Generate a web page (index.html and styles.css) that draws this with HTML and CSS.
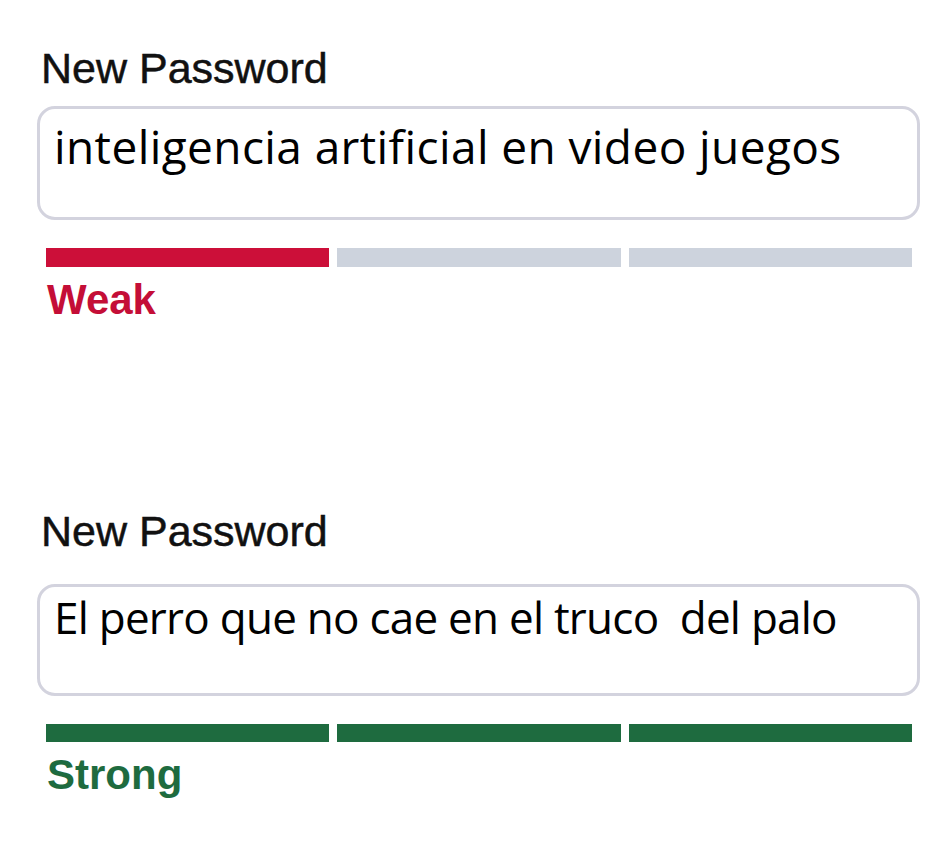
FILE: index.html
```html
<!DOCTYPE html>
<html lang="en">
<head>
<meta charset="utf-8">
<title>New Password</title>
<link rel="stylesheet" href="styles.css">
</head>
<body>
<main class="page">
  <section class="field field-weak">
    <label class="label">New Password</label>
    <div class="input input-first"><span class="value">inteligencia artificial en video juegos</span></div>
    <div class="meter">
      <span class="seg seg-weak"></span>
      <span class="seg"></span>
      <span class="seg"></span>
    </div>
    <div class="strength strength-weak">Weak</div>
  </section>
  <section class="field field-strong">
    <label class="label">New Password</label>
    <div class="input input-second"><span class="value">El perro que no cae en el truco  del palo</span></div>
    <div class="meter meter-second">
      <span class="seg seg-strong"></span>
      <span class="seg seg-strong"></span>
      <span class="seg seg-strong"></span>
    </div>
    <div class="strength strength-strong">Strong</div>
  </section>
</main>
</body>
</html>
```

FILE: styles.css
```css
html, body {
  margin: 0;
  padding: 0;
  background: #ffffff;
}

.page {
  width: 950px;
  height: 843px;
  overflow: hidden;
  display: flex;
  flex-direction: column;
}

.field {
  display: flex;
  flex-direction: column;
  padding: 0 30px 0 37px;
}

.field-weak {
  padding-top: 47px;
}

.field-strong {
  padding-top: 189px;
}

.label {
  font-family: "Liberation Sans", Arial, sans-serif;
  font-size: 43px;
  line-height: 43px;
  color: #111111;
  -webkit-text-stroke: 0.5px #111111;
  padding-left: 4px;
}

.input {
  margin-top: 16px;
  height: 114px;
  box-sizing: border-box;
  border: 3px solid #d3d3de;
  border-radius: 18px;
  padding-left: 14px;
  font-family: "Open Sans", sans-serif;
  color: #000000;
  white-space: pre;
}

.input-first {
  padding-top: 11px;
  font-size: 46px;
  line-height: 52px;
  letter-spacing: 0.4px;
}

.input-second {
  margin-top: 31px;
  padding-top: 4px;
  height: 112px;
  font-size: 44px;
  line-height: 52px;
  letter-spacing: -0.75px;
}

.meter {
  display: flex;
  gap: 8px;
  margin: 28px 8px 0 9px;
}

.seg {
  flex: 1;
  height: 19px;
  background: #cdd3dd;
}

.meter-second .seg {
  height: 18px;
}

.seg-weak {
  background: #cc0f39;
}

.seg-strong {
  background: #1e6b3f;
}

.strength {
  margin-top: 12px;
  padding-left: 10px;
  font-family: "Liberation Sans", Arial, sans-serif;
  font-weight: bold;
  font-size: 42px;
  line-height: 42px;
}

.strength-weak {
  color: #c40e37;
}

.strength-strong {
  color: #1e6b3f;
}
```
